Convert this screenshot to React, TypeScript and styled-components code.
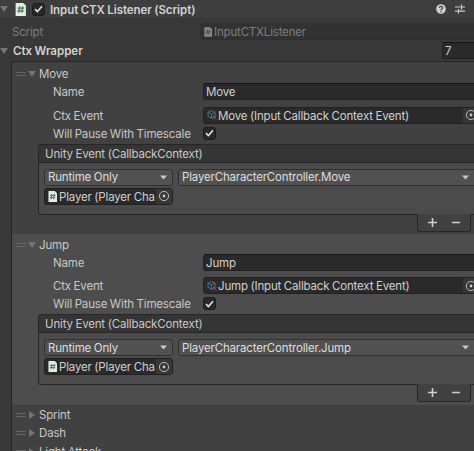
import React, { useState } from 'react';

import styled, { createGlobalStyle } from 'styled-components';

interface IWrapperItem {
  id: number;
  name: string;
}

interface IWrapperEntryProps {
  item: IWrapperItem;
  selected?: boolean;
}

interface ICheckProps {
  size?: number;
}

const GlobalStyle = createGlobalStyle`
  * {
    box-sizing: border-box;
  }

  body {
    margin: 0;
    background-color: #383838;
    overflow: hidden;
  }

  svg {
    display: block;
    flex-shrink: 0;
  }
`;

const Inspector = styled.div`
  width: 480px;
  height: 451px;
  overflow: hidden;
  display: flex;
  flex-direction: column;
  background-color: #383838;
  color: #c8c8c8;
  font-family: Inter, 'Liberation Sans', sans-serif;
  font-size: 11.5px;
  line-height: 16px;
  letter-spacing: -0.17px;
  word-spacing: -0.4px;
  white-space: nowrap;
`;

const Header = styled.div`
  height: 19px;
  flex-shrink: 0;
  display: flex;
  align-items: center;
  background-color: #3e3e3e;
  border-bottom: 1px solid #343434;

  .title {
    flex: 1;
    margin-left: 5px;
    padding-top: 2px;
    font-weight: 600;
    letter-spacing: -0.06px;
    color: #d2d2d2;
  }

  .script {
    margin: 0 6px 0 7px;
  }
`;

const HeaderActions = styled.div`
  display: flex;
  align-items: center;
  gap: 9px;
  padding-right: 15px;
`;

const ScriptRow = styled.div`
  height: 17px;
  margin-top: 4px;
  flex-shrink: 0;
  display: flex;
  align-items: center;
  padding-left: 12px;
  color: #7e7e7e;

  .label {
    width: 188px;
  }
`;

const ScriptField = styled.div`
  flex: 1;
  height: 17px;
  display: flex;
  align-items: center;
  gap: 2px;
  padding-left: 3px;
  border: 1px solid #303030;
  border-radius: 3px;
  background-color: #323232;
`;

const ArrayRow = styled.div`
  height: 17px;
  margin-top: 2px;
  flex-shrink: 0;
  display: flex;
  align-items: center;

  .label {
    flex: 1;
    margin-left: 5px;
    padding-top: 1px;
    font-weight: 600;
    letter-spacing: 0;
    color: #d2d2d2;
  }
`;

const TextField = styled.div<{ $width?: number }>`
  width: ${({ $width }) => ($width ? `${$width}px` : 'auto')};
  flex: ${({ $width }) => ($width ? 'none' : 1)};
  height: 17px;
  line-height: 17px;
  padding-left: 2px;
  border: 1px solid #212121;
  border-top-color: #151515;
  border-radius: 3px;
  background-color: #2a2a2a;
  color: #d0d0d0;
`;

const List = styled.div`
  flex: 1;
  min-height: 0;
  margin: 2px 0 0 11px;
  padding-top: 1.5px;
  overflow: hidden;
  border: 1px solid #272727;
  border-right: none;
  border-bottom: none;
  border-radius: 3px 0 0 0;
  background-color: #414141;
`;

const Entry = styled.div<{ $selected: boolean }>`
  height: 170.5px;
  background-color: ${({ $selected }) => ($selected ? '#4d4d4d' : '#414141')};
`;

const EntryHeader = styled.div<{ $height: number }>`
  height: ${({ $height }) => $height}px;
  display: flex;
  align-items: center;
  padding: 2px 0 0 4px;

  .foldout {
    margin: 0 3px 0 2px;
  }
`;

const PropertyRow = styled.div<{ $gap?: number }>`
  height: 17px;
  margin-top: ${({ $gap = 0 }) => $gap}px;
  display: flex;
  align-items: center;
  padding-left: 41px;

  .label {
    width: 150px;
    padding-top: 1px;
  }
`;

const ObjectField = styled.div<{ $width?: number }>`
  width: ${({ $width }) => ($width ? `${$width}px` : 'auto')};
  flex: ${({ $width }) => ($width ? 'none' : 1)};
  height: 17px;
  display: flex;
  align-items: center;
  padding-left: 3px;
  border: 1px solid #212121;
  border-radius: 3px;
  background-color: #2a2a2a;
  color: #d0d0d0;

  .value {
    flex: 1;
    margin-left: 1px;
    padding-top: 1px;
  }

  .script {
    margin-right: 1px;
  }
`;

const Picker = styled.div<{ $width: number }>`
  width: ${({ $width }) => $width}px;
  height: 15px;
  flex-shrink: 0;
  display: flex;
  align-items: center;
  padding-left: 2px;
  background-color: #373737;
`;

const CheckBox = styled.div<{ $size: number }>`
  width: ${({ $size }) => $size}px;
  height: ${({ $size }) => $size}px;
  display: flex;
  align-items: center;
  justify-content: center;
  border: 1px solid #1c1c1c;
  border-radius: 3px;
  background-color: #282828;
`;

const EventBox = styled.div`
  height: 71px;
  margin: 2px 0 0 26px;
  border: 1px solid #262626;
  border-right: none;
  border-radius: 3px 0 0 3px;
  background-color: #4b4b4b;
`;

const EventTitle = styled.div`
  height: 18px;
  line-height: 18px;
  padding-left: 6px;
  border-bottom: 1px solid #262626;
  background-color: #353535;
`;

const EventBody = styled.div`
  display: grid;
  grid-template-columns: 129px 1fr;
  column-gap: 5px;
  row-gap: 2px;
  padding: 6px 0 0 5px;
`;

const DropdownField = styled.div<{ $inset: number }>`
  height: 17px;
  display: flex;
  align-items: center;
  justify-content: space-between;
  padding: 0 ${({ $inset }) => $inset}px 0 3px;
  border: 1px solid #303030;
  border-radius: 3px;
  background-color: #515151;
  color: #dedede;
`;

const EventFooter = styled.div`
  width: 54px;
  height: 18px;
  margin: -1px 0 0 405px;
  display: flex;
  align-items: center;
  justify-content: space-between;
  padding: 0 10px 0 9px;
  border: 1px solid #262626;
  border-top: none;
  border-radius: 0 0 3px 3px;
  background-color: #414141;
`;

function Foldout({ open = false }: { open?: boolean }) {
  return (
    <svg className="foldout" width="8" height="8" viewBox="0 0 8 8" fill="#747474">
      <path d={open ? 'M0 1h8L4 7z' : 'M1 0v8l6-4z'} />
    </svg>
  );
}

function DragHandle() {
  return (
    <svg width="10" height="6" viewBox="0 0 10 6" fill="#646464">
      <path d="M0 1h10v1H0zM0 4h10v1H0z" />
    </svg>
  );
}

function ScriptIcon({ size = 10, color = '#3f7f4c', paper = '#e6ebe6' }) {
  return (
    <svg className="script" width={size} height={size + 2} viewBox="0 0 10 12" fill="none">
      <path d="M0.5 0h7L10 2.3V12H0.5z" fill={paper} />
      <path d="M4.4 3 3.4 9M7.2 3l-1 6M2.3 4.8h6M2 7.2h6" stroke={color} strokeWidth="1.1" />
    </svg>
  );
}

function AssetIcon() {
  return (
    <svg width="10" height="12" viewBox="0 0 10 12" fill="none">
      <path d="M4.5 1.5 8 3.2v4L4.5 9.2 1 7.2v-4zM1 3.2l3.5 1.9L8 3.2M4.5 5.1v4" stroke="#48758c" />
      <path d="M6 7 9.500 10.500M9.500 7 6 10.500" stroke="#a8433a" />
    </svg>
  );
}

function PickerIcon() {
  return (
    <svg width="12" height="12" viewBox="0 0 12 12" fill="none">
      <circle cx="6" cy="6" r="4.6" stroke="#b8b8b8" />
      <circle cx="6" cy="6" r="1.4" fill="#c8c8c8" />
    </svg>
  );
}

function Caret() {
  return (
    <svg width="7" height="5" viewBox="0 0 7 5" fill="#c8c8c8">
      <path d="M0 0.5h7L3.5 4.5z" />
    </svg>
  );
}

function Check({ size = 13 }: ICheckProps) {
  const [checked, setChecked] = useState(true);

  return (
    <CheckBox $size={size} onClick={() => setChecked(!checked)}>
      {checked && (
        <svg width="9" height="8" viewBox="0 0 9 8" fill="none">
          <path d="M1 4.2 3.4 6.5 8 1.3" stroke="#e4e4e4" strokeWidth="1.6" />
        </svg>
      )}
    </CheckBox>
  );
}

function UnityEvent({ method }: { method: string }) {
  return (
    <>
      <EventBox>
        <EventTitle>Unity Event (CallbackContext)</EventTitle>
        <EventBody>
          <DropdownField $inset={5}>
            Runtime Only
            <Caret />
          </DropdownField>
          <DropdownField $inset={10}>
            {method}
            <Caret />
          </DropdownField>
          <ObjectField $width={129}>
            <ScriptIcon size={9} />
            <span className="value">Player (Player Cha</span>
            <Picker $width={16}>
              <PickerIcon />
            </Picker>
          </ObjectField>
        </EventBody>
      </EventBox>
      <EventFooter>
        <svg width="11" height="11" viewBox="0 0 11 11" fill="#d0d0d0">
          <path d="M4.7 1h1.6v3.7H10v1.6H6.3V10H4.7V6.3H1V4.7h3.7z" />
        </svg>
        <svg width="8" height="11" viewBox="0 0 8 11" fill="#d0d0d0">
          <path d="M0 4.7h8v1.6H0z" />
        </svg>
      </EventFooter>
    </>
  );
}

function WrapperEntry({ item, selected = false }: IWrapperEntryProps) {
  return (
    <Entry $selected={selected}>
      <EntryHeader $height={19.5}>
        <DragHandle />
        <Foldout open />
        {item.name}
      </EntryHeader>
      <PropertyRow>
        <span className="label">Name</span>
        <TextField>{item.name}</TextField>
      </PropertyRow>
      <PropertyRow $gap={6.5}>
        <span className="label">Ctx Event</span>
        <ObjectField>
          <AssetIcon />
          <span className="value">{item.name} (Input Callback Context Event)</span>
          <Picker $width={16}>
            <PickerIcon />
          </Picker>
        </ObjectField>
      </PropertyRow>
      <PropertyRow $gap={1}>
        <span className="label">Will Pause With Timescale</span>
        <Check />
      </PropertyRow>
      <UnityEvent method={`PlayerCharacterController.${item.name}`} />
    </Entry>
  );
}

const openItems: IWrapperItem[] = [
  { id: 1, name: 'Move' },
  { id: 2, name: 'Jump' },
];

const closedItems: IWrapperItem[] = [
  { id: 3, name: 'Sprint' },
  { id: 4, name: 'Dash' },
  { id: 5, name: 'Light Attack' },
];

export default function App() {
  return (
    <Inspector>
      <GlobalStyle />
      <Header>
        <Foldout open />
        <ScriptIcon size={11} />
        <Check />
        <span className="title">Input CTX Listener (Script)</span>
        <HeaderActions>
          <svg width="10" height="10" viewBox="0 0 10 10" fill="none">
            <circle cx="5" cy="5" r="4.8" fill="#cfcfcf" />
            <path d="M3.4 3.9c0-2 3.2-2 3.2-.1C6.6 5 5 4.9 5 6.2M5 7v1.2" stroke="#3e3e3e" strokeWidth="1.1" />
          </svg>
          <svg width="10" height="10" viewBox="0 0 10 10" fill="none" stroke="#cfcfcf" strokeWidth="1.2">
            <path d="M0 3h5.5M7 3h3M6.5 0.5v5M0 7.2h2.5M4 7.2h6M3.5 5v4.5" />
          </svg>
        </HeaderActions>
      </Header>
      <ScriptRow>
        <span className="label">Script</span>
        <ScriptField>
          <ScriptIcon size={8} color="#4a4a4a" paper="#8a8a8a" />
          InputCTXListener
        </ScriptField>
      </ScriptRow>
      <ArrayRow>
        <Foldout open />
        <span className="label">Ctx Wrapper</span>
        <TextField $width={38}>7</TextField>
      </ArrayRow>
      <List>
        {openItems.map((item) => (
          <WrapperEntry key={item.id} item={item} selected={item.name === 'Jump'} />
        ))}
        {closedItems.map((item) => (
          <EntryHeader key={item.id} $height={18.5}>
            <DragHandle />
            <Foldout />
            {item.name}
          </EntryHeader>
        ))}
      </List>
    </Inspector>
  );
}
